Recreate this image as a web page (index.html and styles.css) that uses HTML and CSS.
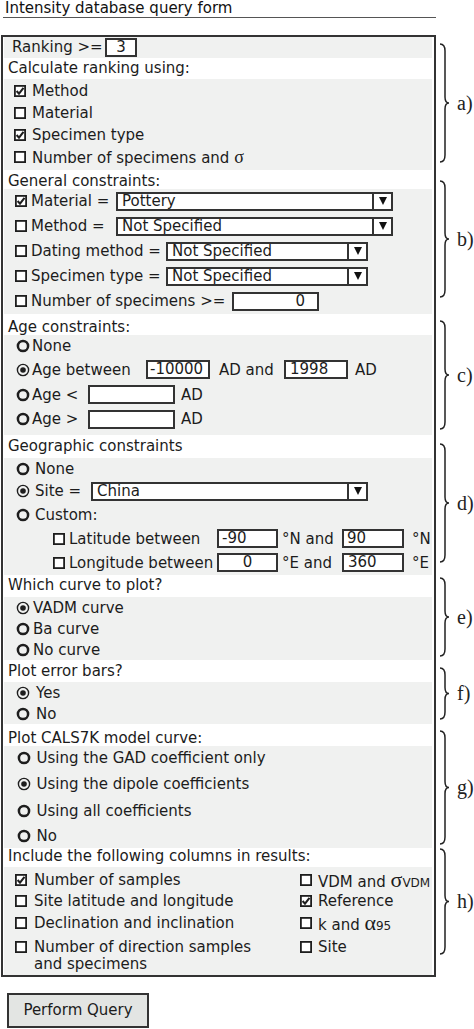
FILE: index.html
```html
<!DOCTYPE html>
<html lang="en">
<head>
<meta charset="utf-8">
<title>Intensity database query form</title>
<link rel="stylesheet" href="styles.css">
</head>
<body>
<h1 class="title">Intensity database query form</h1>
<form class="qform">

  <section class="sec">
    <div class="body top">
      <div class="row rank"><span class="lbl w93">Ranking &gt;=</span><span class="inp w32 c">3</span></div>
      <div class="hdr h-a">Calculate ranking using:</div>
      <div class="grp g-a">
        <div class="row"><svg class="ic cb" viewBox="0 0 12 12"><rect x="0.9" y="0.9" width="10.2" height="10.2"/><path d="M2.6 6 5 8.6 9.5 2.9"/></svg><span>Method</span></div>
        <div class="row"><svg class="ic cb" viewBox="0 0 12 12"><rect x="0.9" y="0.9" width="10.2" height="10.2"/></svg><span>Material</span></div>
        <div class="row"><svg class="ic cb" viewBox="0 0 12 12"><rect x="0.9" y="0.9" width="10.2" height="10.2"/><path d="M2.6 6 5 8.6 9.5 2.9"/></svg><span>Specimen type</span></div>
        <div class="row"><svg class="ic cb" viewBox="0 0 12 12"><rect x="0.9" y="0.9" width="10.2" height="10.2"/></svg><span>Number of specimens and <span class="gk">σ</span></span></div>
      </div>
    </div>
    <div class="anno an-a"><svg class="brace" width="12" height="120" viewBox="0 0 12 120"><path d="M1 1C4 1 6 3 6 8V54C6 58 7.5 60 10 60C7.5 60 6 62 6 66V112C6 117 4 119 1 119"/></svg><span class="lab">a)</span></div>
  </section>

  <section class="sec">
    <div class="body">
      <div class="hdr h-b">General constraints:</div>
      <div class="grp g-b">
        <div class="row"><svg class="ic cb" viewBox="0 0 12 12"><rect x="0.9" y="0.9" width="10.2" height="10.2"/><path d="M2.6 6 5 8.6 9.5 2.9"/></svg><span class="lbl w85">Material =</span><span class="sel w277"><span class="st">Pottery</span><span class="sa"></span></span></div>
        <div class="row"><svg class="ic cb" viewBox="0 0 12 12"><rect x="0.9" y="0.9" width="10.2" height="10.2"/></svg><span class="lbl w85">Method =</span><span class="sel w277"><span class="st">Not Specified</span><span class="sa"></span></span></div>
        <div class="row"><svg class="ic cb" viewBox="0 0 12 12"><rect x="0.9" y="0.9" width="10.2" height="10.2"/></svg><span class="lbl w135">Dating method =</span><span class="sel w202"><span class="st">Not Specified</span><span class="sa"></span></span></div>
        <div class="row"><svg class="ic cb" viewBox="0 0 12 12"><rect x="0.9" y="0.9" width="10.2" height="10.2"/></svg><span class="lbl w135">Specimen type =</span><span class="sel w202"><span class="st">Not Specified</span><span class="sa"></span></span></div>
        <div class="row"><svg class="ic cb" viewBox="0 0 12 12"><rect x="0.9" y="0.9" width="10.2" height="10.2"/></svg><span class="lbl w201">Number of specimens &gt;=</span><span class="inp w87 r">0</span></div>
      </div>
    </div>
    <div class="anno an-b"><svg class="brace" width="12" height="118" viewBox="0 0 12 118"><path d="M1 1C4 1 6 3 6 8V53C6 57 7.5 59 10 59C7.5 59 6 61 6 65V110C6 115 4 117 1 117"/></svg><span class="lab">b)</span></div>
  </section>

  <section class="sec">
    <div class="body">
      <div class="hdr h-c">Age constraints:</div>
      <div class="grp g-c">
        <div class="row h22"><svg class="ic rd" viewBox="0 0 14 14"><circle cx="7" cy="7" r="5.1"/></svg><span>None</span></div>
        <div class="row h26"><svg class="ic rd on" viewBox="0 0 14 14"><circle cx="7" cy="7" r="5.6"/><circle class="dot" cx="7" cy="7" r="2.8"/></svg><span class="lbl w114">Age between</span><span class="inp w64 pl2">-10000</span><span class="lbl ml9 w65">AD and</span><span class="inp w64 pl4">1998</span><span class="lbl ml7">AD</span></div>
        <div class="row h24"><svg class="ic rd" viewBox="0 0 14 14"><circle cx="7" cy="7" r="5.1"/></svg><span class="lbl w56">Age &lt;</span><span class="inp w87"></span><span class="lbl ml6">AD</span></div>
        <div class="row h25"><svg class="ic rd" viewBox="0 0 14 14"><circle cx="7" cy="7" r="5.1"/></svg><span class="lbl w56">Age &gt;</span><span class="inp w87"></span><span class="lbl ml6">AD</span></div>
      </div>
    </div>
    <div class="anno an-c"><svg class="brace" width="12" height="110" viewBox="0 0 12 110"><path d="M1 1C4 1 6 3 6 8V49C6 53 7.5 55 10 55C7.5 55 6 57 6 61V102C6 107 4 109 1 109"/></svg><span class="lab">c)</span></div>
  </section>

  <section class="sec">
    <div class="body">
      <div class="hdr h-d">Geographic constraints</div>
      <div class="grp g-d">
        <div class="row h22"><svg class="ic rd" viewBox="0 0 14 14"><circle cx="7" cy="7" r="5.1"/></svg><span>None</span></div>
        <div class="row h23"><svg class="ic rd on" viewBox="0 0 14 14"><circle cx="7" cy="7" r="5.6"/><circle class="dot" cx="7" cy="7" r="2.8"/></svg><span class="lbl w56">Site =</span><span class="sel w277"><span class="st">China</span><span class="sa"></span></span></div>
        <div class="row h24"><svg class="ic rd" viewBox="0 0 14 14"><circle cx="7" cy="7" r="5.1"/></svg><span>Custom:</span></div>
        <div class="row h24 sub"><svg class="ic cb" viewBox="0 0 12 12"><rect x="0.9" y="0.9" width="10.2" height="10.2"/></svg><span class="lbl w148">Latitude between</span><span class="inp w61 pl3">-90</span><span class="lbl ml4 w60">°N and</span><span class="inp w62 pl3">90</span><span class="lbl ml8">°N</span></div>
        <div class="row h24 sub"><svg class="ic cb" viewBox="0 0 12 12"><rect x="0.9" y="0.9" width="10.2" height="10.2"/></svg><span class="lbl w148">Longitude between</span><span class="inp w61 c">0</span><span class="lbl ml4 w60">°E and</span><span class="inp w62 pl4">360</span><span class="lbl ml8">°E</span></div>
      </div>
    </div>
    <div class="anno an-d"><svg class="brace" width="12" height="120" viewBox="0 0 12 120"><path d="M1 1C4 1 6 3 6 8V54C6 58 7.5 60 10 60C7.5 60 6 62 6 66V112C6 117 4 119 1 119"/></svg><span class="lab">d)</span></div>
  </section>

  <section class="sec">
    <div class="body">
      <div class="hdr h-e">Which curve to plot?</div>
      <div class="grp g-e">
        <div class="row h22"><svg class="ic rd on" viewBox="0 0 14 14"><circle cx="7" cy="7" r="5.6"/><circle class="dot" cx="7" cy="7" r="2.8"/></svg><span>VADM curve</span></div>
        <div class="row h21"><svg class="ic rd" viewBox="0 0 14 14"><circle cx="7" cy="7" r="5.1"/></svg><span>Ba curve</span></div>
        <div class="row h20"><svg class="ic rd" viewBox="0 0 14 14"><circle cx="7" cy="7" r="5.1"/></svg><span>No curve</span></div>
      </div>
    </div>
    <div class="anno an-e"><svg class="brace" width="12" height="80" viewBox="0 0 12 80"><path d="M1 1C4 1 6 3 6 8V34C6 38 7.5 40 10 40C7.5 40 6 42 6 46V72C6 77 4 79 1 79"/></svg><span class="lab">e)</span></div>
  </section>

  <section class="sec">
    <div class="body">
      <div class="hdr h-f">Plot error bars?</div>
      <div class="grp g-f">
        <div class="row h22"><svg class="ic rd on" viewBox="0 0 14 14"><circle cx="7" cy="7" r="5.6"/><circle class="dot" cx="7" cy="7" r="2.8"/></svg><span>Yes</span></div>
        <div class="row h20"><svg class="ic rd" viewBox="0 0 14 14"><circle cx="7" cy="7" r="5.1"/></svg><span>No</span></div>
      </div>
    </div>
    <div class="anno an-f"><svg class="brace" width="12" height="53" viewBox="0 0 12 53"><path d="M1 1C4 1 6 3 6 8V20.5C6 24.5 7.5 26.5 10 26.5C7.5 26.5 6 28.5 6 32.5V45C6 50 4 52 1 52"/></svg><span class="lab">f)</span></div>
  </section>

  <section class="sec">
    <div class="body">
      <div class="hdr h-g">Plot CALS7K model curve:</div>
      <div class="grp g-g">
        <div class="row h25"><svg class="ic rd" viewBox="0 0 14 14"><circle cx="7" cy="7" r="5.1"/></svg><span>Using the GAD coefficient only</span></div>
        <div class="row h27"><svg class="ic rd on" viewBox="0 0 14 14"><circle cx="7" cy="7" r="5.6"/><circle class="dot" cx="7" cy="7" r="2.8"/></svg><span>Using the dipole coefficients</span></div>
        <div class="row h26"><svg class="ic rd" viewBox="0 0 14 14"><circle cx="7" cy="7" r="5.1"/></svg><span>Using all coefficients</span></div>
        <div class="row h24"><svg class="ic rd" viewBox="0 0 14 14"><circle cx="7" cy="7" r="5.1"/></svg><span>No</span></div>
      </div>
    </div>
    <div class="anno an-g"><svg class="brace" width="12" height="115" viewBox="0 0 12 115"><path d="M1 1C4 1 6 3 6 8V51.5C6 55.5 7.5 57.5 10 57.5C7.5 57.5 6 59.5 6 63.5V107C6 112 4 114 1 114"/></svg><span class="lab">g)</span></div>
  </section>

  <section class="sec">
    <div class="body bot">
      <div class="hdr h-h">Include the following columns in results:</div>
      <div class="grp g-h">
        <div class="hi"><svg class="ic cb" viewBox="0 0 12 12"><rect x="0.9" y="0.9" width="10.2" height="10.2"/><path d="M2.6 6 5 8.6 9.5 2.9"/></svg><span>Number of samples</span></div>
        <div class="hi rc"><svg class="ic cb" viewBox="0 0 12 12"><rect x="0.9" y="0.9" width="10.2" height="10.2"/></svg><span>VDM and <span class="gk big">σ</span><span class="sm">VDM</span></span></div>
        <div class="hi"><svg class="ic cb" viewBox="0 0 12 12"><rect x="0.9" y="0.9" width="10.2" height="10.2"/></svg><span>Site latitude and longitude</span></div>
        <div class="hi rc"><svg class="ic cb" viewBox="0 0 12 12"><rect x="0.9" y="0.9" width="10.2" height="10.2"/><path d="M2.6 6 5 8.6 9.5 2.9"/></svg><span>Reference</span></div>
        <div class="hi"><svg class="ic cb" viewBox="0 0 12 12"><rect x="0.9" y="0.9" width="10.2" height="10.2"/></svg><span>Declination and inclination</span></div>
        <div class="hi rc"><svg class="ic cb" viewBox="0 0 12 12"><rect x="0.9" y="0.9" width="10.2" height="10.2"/></svg><span>k and <span class="gk big">α</span><span class="sm">95</span></span></div>
        <div class="hi last"><svg class="ic cb" viewBox="0 0 12 12"><rect x="0.9" y="0.9" width="10.2" height="10.2"/></svg><span class="two">Number of direction samples<br>and specimens</span></div>
        <div class="hi rc last"><svg class="ic cb" viewBox="0 0 12 12"><rect x="0.9" y="0.9" width="10.2" height="10.2"/></svg><span class="two">Site</span></div>
      </div>
    </div>
    <div class="anno an-h"><svg class="brace" width="12" height="107" viewBox="0 0 12 107"><path d="M1 1C4 1 6 3 6 8V47.5C6 51.5 7.5 53.5 10 53.5C7.5 53.5 6 55.5 6 59.5V99C6 104 4 106 1 106"/></svg><span class="lab">h)</span></div>
  </section>

</form>
<button class="btn" type="button">Perform Query</button>
</body>
</html>
```

FILE: styles.css
```css
html, body {
  margin: 0;
  padding: 0;
  background: #fff;
}
body {
  font-family: "DejaVu Sans", Verdana, sans-serif;
  font-size: 15px;
  color: #1c1c1c;
}

.title {
  margin: 0 0 0 3px;
  width: 431px;
  height: 16px;
  padding: 0 0 1px 2px;
  border-bottom: 1.5px solid #555;
  font-size: 15px;
  font-weight: normal;
  line-height: 16px;
  color: #111;
  white-space: nowrap;
}

.qform {
  margin: 16.5px 0 0 0;
}

.sec {
  display: flex;
  align-items: flex-start;
}

.body {
  flex: none;
  width: 435px;
  margin-left: 1px;
  box-sizing: border-box;
  border-left: 2px solid #333;
  border-right: 2px solid #333;
  padding: 0 2px 0 1px;
}
.body.top { border-top: 2px solid #333; }
.body.bot { border-bottom: 2px solid #333; }

.grp, .rank { background: #f0f1f0; }

.row {
  display: flex;
  align-items: center;
  white-space: nowrap;
}
.row > * { flex: none; }

.rank { height: 21px; padding-left: 8px; }

.hdr {
  box-sizing: border-box;
  padding-left: 4px;
  line-height: 17px;
  white-space: nowrap;
}
.h-a { height: 21px; padding-top: 2.5px; }
.h-b { height: 19px; padding-top: 3.5px; }
.h-c { height: 21px; padding-top: 5px; }
.h-d { height: 23px; padding-top: 3.25px; }
.h-e { height: 22px; padding-top: 2.25px; }
.h-f { height: 22px; padding-top: 3.25px; }
.h-g { height: 22px; padding-top: 6.5px; }
.h-h { height: 19px; padding-top: 0.5px; }

.h20 { height: 20px; }
.h21 { height: 21px; }
.h22 { height: 22px; }
.h23 { height: 23px; }
.h24 { height: 24px; }
.h25 { height: 25px; }
.h26 { height: 26px; }
.h27 { height: 27px; }

/* groups */
.g-a { padding: 1px 0 1px 10px; }
.g-a .row { height: 22.25px; }
.g-a .ic { margin-right: 6px; }

.g-b { padding-left: 11px; }
.g-b .row { height: 25px; }
.g-b .ic { margin-right: 4px; }

.g-c { padding: 0 0 3px 12px; }
.g-c .ic { margin-right: 2px; }

.g-d { padding-left: 12px; }
.g-d .rd { margin-right: 5px; }
.g-d .sub { padding-left: 37px; }
.g-d .sub .cb { margin-right: 4px; }

.g-e { padding-left: 12px; }
.g-e .ic { margin-right: 3px; }

.g-f { padding-left: 12px; }
.g-f .ic { margin-right: 6px; }

.g-g { padding-left: 12.5px; }
.g-g .ic { margin-right: 6px; }

.g-h {
  display: grid;
  grid-template-columns: 285px 1fr;
  grid-template-rows: 21px 21.5px 21.5px auto;
  padding: 3px 0 1px 11px;
}
.hi {
  display: flex;
  align-items: center;
  white-space: nowrap;
}
.hi .ic { margin-right: 7px; flex: none; }
.hi.rc .ic { margin-right: 6px; }
.hi.last {
  align-items: flex-start;
  padding-top: 5px;
}
.hi.last .ic { margin-top: 2.75px; }
.two { line-height: 17.5px; }

/* labels */
.lbl { white-space: nowrap; }
.w56 { width: 56px; }
.w60 { width: 60px; }
.w65 { width: 65px; }
.w85 { width: 85px; }
.w93 { width: 93px; }
.w114 { width: 114px; }
.w135 { width: 135px; }
.w148 { width: 148px; }
.w201 { width: 201px; }
.ml4 { margin-left: 4px; }
.ml6 { margin-left: 6px; }
.ml7 { margin-left: 7px; }
.ml8 { margin-left: 8px; }
.ml9 { margin-left: 9px; }

/* icons */
.cb { width: 12px; height: 12px; }
.cb rect { fill: #fff; stroke: #1e1e1e; stroke-width: 1.8; }
.cb path { fill: none; stroke: #1e1e1e; stroke-width: 2.1; }
.rd { width: 14px; height: 14px; }
.rd circle { fill: none; stroke: #1e1e1e; stroke-width: 2.5; }
.rd.on circle { stroke-width: 1.4; }
.rd .dot { fill: #1e1e1e; stroke: none; }

/* text inputs */
.inp {
  display: flex;
  align-items: center;
  box-sizing: border-box;
  height: 19px;
  border: 2px solid #333;
  background: #fff;
  line-height: 15px;
  padding: 0 2px;
  overflow: hidden;
}
.inp.c { justify-content: center; }
.inp.r { justify-content: flex-end; padding-right: 12px; }
.pl2 { padding-left: 2px; }
.pl3 { padding-left: 3px; }
.pl4 { padding-left: 4px; }
.w32 { width: 32px; }
.w61 { width: 61px; }
.w62 { width: 62px; }
.w64 { width: 64px; }
.w87 { width: 87px; }

/* select boxes */
.sel {
  display: flex;
  box-sizing: border-box;
  height: 19px;
  border: 2px solid #333;
  background: #fff;
}
.w202 { width: 202px; }
.w277 { width: 277px; }
.st {
  flex: 1;
  padding-left: 4px;
  line-height: 15px;
  align-self: center;
}
.sa {
  flex: none;
  width: 19px;
  box-sizing: border-box;
  border-left: 2px solid #333;
  display: flex;
  align-items: center;
  justify-content: center;
}
.sa::after {
  content: "";
  border-left: 4.5px solid transparent;
  border-right: 4.5px solid transparent;
  border-top: 8px solid #111;
}

/* greek letters */
.gk {
  font-family: "Liberation Serif", "Times New Roman", serif;
  font-size: 18px;
  line-height: 1;
}
.gk.big { font-size: 22px; }
.sm { font-size: 12px; line-height: 1; }

/* brace annotations */
.anno {
  display: flex;
  align-items: center;
  margin-left: 3px;
}
.brace { flex: none; }
.brace path { fill: none; stroke: #222; stroke-width: 1.5; }
.lab {
  margin-left: 6px;
  font-family: "Liberation Serif", "Times New Roman", serif;
  font-size: 20px;
  line-height: 1;
  color: #222;
  white-space: nowrap;
}
.an-a { margin-top: 8px; }
.an-b { margin-top: 10px; }
.an-c { margin-top: 6px; }
.an-d { margin-top: 8px; }
.an-e { margin-top: 2px; }
.an-f { margin-top: 7px; }
.an-g { margin-top: 6px; }
.an-h { margin-top: 0; }

/* button */
.btn {
  display: block;
  margin: 16px 0 0 7px;
  width: 142px;
  height: 35px;
  padding: 0;
  border: 2px solid #333;
  background: #e3e5e3;
  font-family: inherit;
  font-size: 15px;
  color: #1c1c1c;
  border-radius: 0;
}
```
